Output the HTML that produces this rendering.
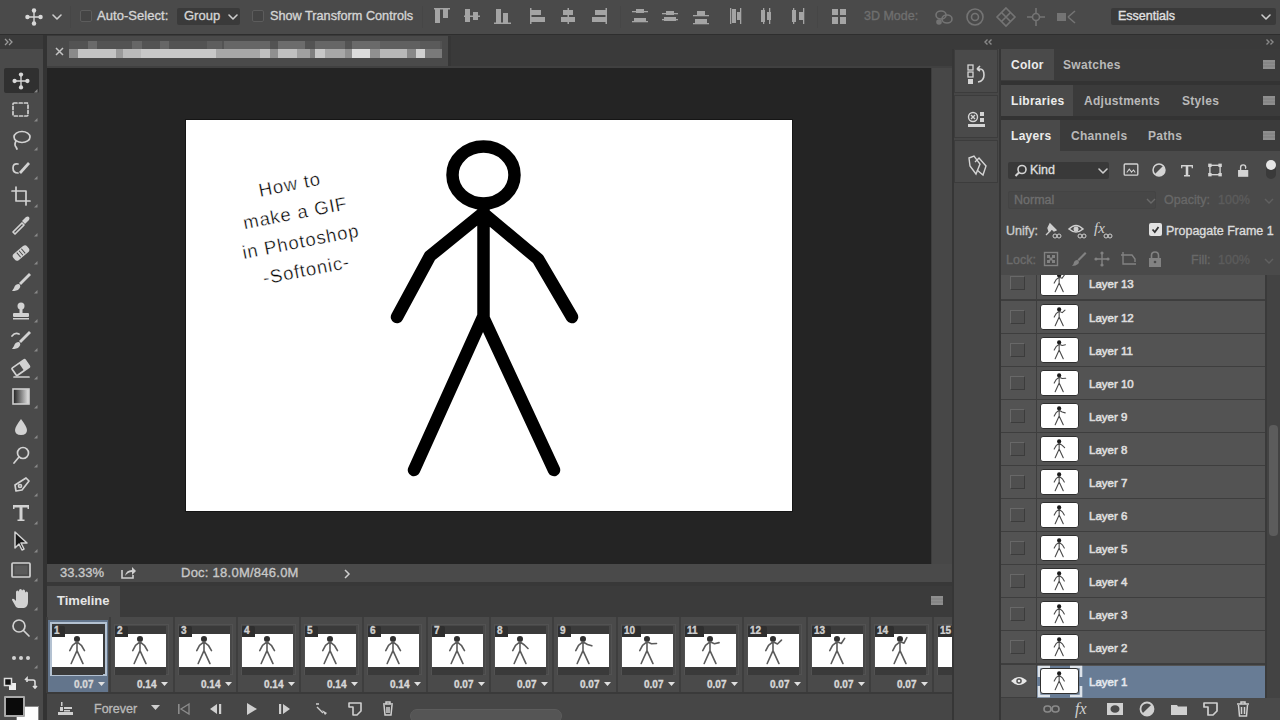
<!DOCTYPE html><html><head><meta charset="utf-8"><style>
*{margin:0;padding:0;box-sizing:border-box}
html,body{width:1280px;height:720px;overflow:hidden;background:#3a3a3a;font-family:"Liberation Sans",sans-serif;color:#d6d6d6}
.a{position:absolute}
.t{position:absolute;white-space:nowrap;font-size:12px;line-height:14px;-webkit-text-stroke:0.35px currentColor}
svg{position:absolute;overflow:visible}
.ic{fill:none;stroke:#cdcdcd;stroke-width:1.6;stroke-linecap:round;stroke-linejoin:round}
.icf{fill:#cdcdcd;stroke:none}
.tab{position:absolute;font-size:12px;font-weight:bold;letter-spacing:.3px;line-height:14px;white-space:nowrap}
</style></head><body>
<svg width="0" height="0" style="position:absolute"><symbol id="fig" viewBox="0 0 606 391">
<g fill="none" stroke="#000" stroke-width="12.5" stroke-linecap="round" stroke-linejoin="round">
<ellipse cx="297.5" cy="55" rx="31" ry="28.5"/>
<path d="M297.5 84 V197 M297 93 L244 136 L211 197 M297 93 L352 139 L386 197 M297 197 L228 350 M297 197 L368 350"/>
</g></symbol>
<symbol id="figw" viewBox="0 0 606 391">
<g fill="none" stroke="#000" stroke-width="14" stroke-linecap="round" stroke-linejoin="round">
<circle cx="297" cy="55" r="31"/>
<path d="M297 88 V197 M297 93 L244 136 L211 197 M297 93 L352 110 L400 80 M297 197 L228 350 M297 197 L368 350"/>
</g></symbol>
<symbol id="figt" viewBox="0 0 606 391">
<circle cx="297" cy="60" r="36" fill="#1a1a1a"/>
<g fill="none" stroke="#4a4a4a" stroke-width="19" stroke-linecap="round" stroke-linejoin="round">
<path d="M297 88 V197 M297 93 L244 136 L211 197 M297 93 L352 139 L386 197 M297 197 L228 350 M297 197 L368 350"/>
</g></symbol>
<symbol id="figtw" viewBox="0 0 606 391">
<circle cx="297" cy="60" r="36" fill="#1a1a1a"/>
<g fill="none" stroke="#4a4a4a" stroke-width="19" stroke-linecap="round" stroke-linejoin="round">
<path d="M297 88 V197 M297 93 L244 136 L211 197 M297 93 L352 120 L410 90 M297 197 L228 350 M297 197 L368 350"/>
</g></symbol><symbol id="figt8" viewBox="0 0 606 391">
<circle cx="297" cy="60" r="36" fill="#1a1a1a"/>
<g fill="none" stroke="#4a4a4a" stroke-width="19" stroke-linecap="round" stroke-linejoin="round">
<path d="M297 88 V197 M297 93 L244 136 L211 197 M297 93 L350 130 L392 172 M297 197 L228 350 M297 197 L368 350"/>
</g></symbol>
<symbol id="figt9" viewBox="0 0 606 391">
<circle cx="297" cy="60" r="36" fill="#1a1a1a"/>
<g fill="none" stroke="#4a4a4a" stroke-width="19" stroke-linecap="round" stroke-linejoin="round">
<path d="M297 88 V197 M297 93 L244 136 L211 197 M297 93 L350 125 L402 140 M297 197 L228 350 M297 197 L368 350"/>
</g></symbol>
<symbol id="figt10" viewBox="0 0 606 391">
<circle cx="297" cy="60" r="36" fill="#1a1a1a"/>
<g fill="none" stroke="#4a4a4a" stroke-width="19" stroke-linecap="round" stroke-linejoin="round">
<path d="M297 88 V197 M297 93 L244 136 L211 197 M297 93 L350 115 L410 112 M297 197 L228 350 M297 197 L368 350"/>
</g></symbol>
<symbol id="figt11" viewBox="0 0 606 391">
<circle cx="297" cy="60" r="36" fill="#1a1a1a"/>
<g fill="none" stroke="#4a4a4a" stroke-width="19" stroke-linecap="round" stroke-linejoin="round">
<path d="M297 88 V197 M297 93 L244 136 L211 197 M297 93 L350 115 L405 102 M297 197 L228 350 M297 197 L368 350"/>
</g></symbol>
<symbol id="figt12" viewBox="0 0 606 391">
<circle cx="297" cy="60" r="36" fill="#1a1a1a"/>
<g fill="none" stroke="#4a4a4a" stroke-width="19" stroke-linecap="round" stroke-linejoin="round">
<path d="M297 88 V197 M297 93 L244 136 L211 197 M297 93 L350 118 L398 72 M297 197 L228 350 M297 197 L368 350"/>
</g></symbol>
<symbol id="figt13" viewBox="0 0 606 391">
<circle cx="297" cy="60" r="36" fill="#1a1a1a"/>
<g fill="none" stroke="#4a4a4a" stroke-width="19" stroke-linecap="round" stroke-linejoin="round">
<path d="M297 88 V197 M297 93 L244 136 L211 197 M297 93 L348 112 L388 52 M297 197 L228 350 M297 197 L368 350"/>
</g></symbol>
<symbol id="figt14" viewBox="0 0 606 391">
<circle cx="297" cy="60" r="36" fill="#1a1a1a"/>
<g fill="none" stroke="#4a4a4a" stroke-width="19" stroke-linecap="round" stroke-linejoin="round">
<path d="M297 88 V197 M297 93 L244 136 L211 197 M297 93 L345 108 L378 42 M297 197 L228 350 M297 197 L368 350"/>
</g></symbol>
</svg>
<div id="wrap" style="position:absolute;left:0;top:0;width:1280px;height:720px;overflow:hidden">
<div class="a" style="left:0px;top:0px;width:1280px;height:34px;background:#4a4a4a;"></div>
<div class="a" style="left:0px;top:34px;width:1280px;height:1px;background:#2e2e2e;"></div>
<svg style="left:20px;top:4px;" width="28" height="28" viewBox="0 0 28 28"><g transform="translate(14,13) scale(0.82)"><path d="M-8 0H8M0 -8V8" stroke="#d8d8d8" stroke-width="1.7"/><g fill="#d8d8d8"><circle cx="-8" cy="0" r="2.7"/><circle cx="8" cy="0" r="2.7"/><circle cx="0" cy="-8" r="2.7"/><circle cx="0" cy="8" r="2.7"/></g></g></svg>
<svg style="left:50px;top:10px;" width="14" height="14" viewBox="0 0 14 14"><path class="ic" d="M3 5 L7 9 L11 5"/></svg>
<div class="a" style="left:70px;top:6px;width:1px;height:22px;background:#464646;"></div>
<div class="a" style="left:80px;top:10px;width:12px;height:12px;background:#444;border:1px solid #5c5c5c;border-radius:2px"></div>
<div class="t" style="left:97px;top:9px;font-size:13px;color:#d4d4d4;font-weight:normal;letter-spacing:0.05px">Auto-Select:</div>
<div class="a" style="left:177px;top:8px;width:63px;height:17px;background:#3a3a3a;border-radius:2px"></div>
<div class="t" style="left:184px;top:9px;font-size:13px;color:#d4d4d4;font-weight:normal;">Group</div>
<svg style="left:226px;top:10px;" width="14" height="14" viewBox="0 0 14 14"><path class="ic" d="M3 5 L7 9 L11 5"/></svg>
<div class="a" style="left:252px;top:10px;width:12px;height:12px;background:#444;border:1px solid #5c5c5c;border-radius:2px"></div>
<div class="t" style="left:270px;top:9px;font-size:12.7px;color:#d4d4d4;font-weight:normal;">Show Transform Controls</div>
<div class="a" style="left:422px;top:6px;width:1px;height:22px;background:#464646;"></div>
<svg style="left:430px;top:4px;" width="24" height="24" viewBox="0 0 24 24"><g fill="#a4a4a4"><rect x="4" y="4" width="16" height="1.5"/><rect x="5" y="5" width="5" height="14"/><rect x="13" y="5" width="5" height="9"/></g></svg>
<svg style="left:460px;top:4px;" width="24" height="24" viewBox="0 0 24 24"><g fill="#a4a4a4"><rect x="4" y="11.5" width="16" height="1.5"/><rect x="5" y="5" width="5" height="13"/><rect x="13" y="8" width="5" height="8"/></g></svg>
<svg style="left:490px;top:4px;" width="24" height="24" viewBox="0 0 24 24"><g fill="#a4a4a4"><rect x="4" y="18.5" width="17" height="1.5"/><rect x="6" y="5" width="5" height="14"/><rect x="13" y="9" width="5" height="10"/></g></svg>
<svg style="left:525px;top:4px;" width="24" height="24" viewBox="0 0 24 24"><g fill="#a4a4a4"><rect x="5" y="4" width="1.5" height="16"/><rect x="6" y="6" width="10" height="5"/><rect x="6" y="13" width="14" height="5"/></g></svg>
<svg style="left:556px;top:4px;" width="24" height="24" viewBox="0 0 24 24"><g fill="#a4a4a4"><rect x="11.5" y="4" width="1.5" height="16"/><rect x="7" y="6" width="10" height="5"/><rect x="5" y="13" width="14" height="5"/></g></svg>
<svg style="left:587px;top:4px;" width="24" height="24" viewBox="0 0 24 24"><g fill="#a4a4a4"><rect x="18.5" y="4" width="1.5" height="16"/><rect x="8" y="6" width="11" height="5"/><rect x="5" y="13" width="14" height="5"/></g></svg>
<div class="a" style="left:620px;top:6px;width:1px;height:22px;background:#464646;"></div>
<svg style="left:628px;top:4px;" width="24" height="24" viewBox="0 0 24 24"><g fill="#a4a4a4"><rect x="4" y="7" width="16" height="1.3"/><rect x="8" y="5" width="8" height="4"/><rect x="4" y="17" width="16" height="1.3"/><rect x="6" y="14" width="12" height="4"/></g></svg>
<svg style="left:658px;top:4px;" width="24" height="24" viewBox="0 0 24 24"><g fill="#a4a4a4"><rect x="4" y="9" width="16" height="1.3"/><rect x="8" y="7" width="8" height="4"/><rect x="4" y="15" width="16" height="1.3"/><rect x="6" y="13" width="12" height="4"/></g></svg>
<svg style="left:689px;top:4px;" width="24" height="24" viewBox="0 0 24 24"><g fill="#a4a4a4"><rect x="4" y="11" width="16" height="1.3"/><rect x="8" y="7" width="8" height="4"/><rect x="4" y="19" width="16" height="1.3"/><rect x="6" y="15" width="12" height="4"/></g></svg>
<svg style="left:724px;top:4px;" width="24" height="24" viewBox="0 0 24 24"><g fill="#a4a4a4"><rect x="6" y="4" width="1.3" height="16"/><rect x="8" y="5" width="4" height="14"/><rect x="16" y="4" width="1.3" height="16"/><rect x="13" y="8" width="4" height="8"/></g></svg>
<svg style="left:754px;top:4px;" width="24" height="24" viewBox="0 0 24 24"><g fill="#a4a4a4"><rect x="9" y="4" width="1.3" height="16"/><rect x="7" y="6" width="4" height="12"/><rect x="15" y="4" width="1.3" height="16"/><rect x="13" y="8" width="4" height="8"/></g></svg>
<svg style="left:786px;top:4px;" width="24" height="24" viewBox="0 0 24 24"><g fill="#a4a4a4"><rect x="7" y="4" width="1.3" height="16"/><rect x="6" y="6" width="4" height="12"/><rect x="17" y="4" width="1.3" height="16"/><rect x="13" y="8" width="4" height="8"/></g></svg>
<div class="a" style="left:817px;top:6px;width:1px;height:22px;background:#464646;"></div>
<svg style="left:827px;top:4px;" width="24" height="24" viewBox="0 0 24 24"><g fill="#a4a4a4"><rect x="5" y="5" width="6" height="6"/><rect x="13" y="5" width="6" height="6"/><rect x="5" y="13" width="6" height="7"/><rect x="13" y="13" width="6" height="7"/></g></svg>
<div class="t" style="left:864px;top:9px;font-size:12.5px;color:#6f6f6f;font-weight:normal;">3D Mode:</div>
<svg style="left:933px;top:6px;" width="22" height="22" viewBox="0 0 22 22"><g fill="none" stroke="#747474" stroke-width="1.6"><ellipse cx="8" cy="9" rx="5" ry="4"/><ellipse cx="14" cy="13" rx="5" ry="4"/><circle cx="6" cy="16" r="2" fill="#747474"/></g></svg>
<svg style="left:964px;top:6px;" width="22" height="22" viewBox="0 0 22 22"><g fill="none" stroke="#747474" stroke-width="1.6"><circle cx="11" cy="11" r="8"/><circle cx="11" cy="11" r="3.5"/></g></svg>
<svg style="left:995px;top:6px;" width="22" height="22" viewBox="0 0 22 22"><g fill="none" stroke="#747474" stroke-width="1.6"><path d="M11 2 L20 11 L11 20 L2 11Z"/><path d="M6.5 6.5 L15.5 15.5 M15.5 6.5 L6.5 15.5"/></g></svg>
<svg style="left:1025px;top:6px;" width="22" height="22" viewBox="0 0 22 22"><g fill="none" stroke="#747474" stroke-width="1.6"><circle cx="11" cy="11" r="3.5"/><path d="M11 2V7M11 15V20M2 11H7M15 11H20"/></g></svg>
<svg style="left:1056px;top:6px;" width="22" height="22" viewBox="0 0 22 22"><g fill="#747474"><rect x="1" y="7" width="9" height="8"/></g><g fill="none" stroke="#747474" stroke-width="1.6"><path d="M12 11 L19 5 M12 11 L19 17"/></g></svg>
<div class="a" style="left:1111px;top:8px;width:165px;height:17px;background:#3a3a3a;border-radius:2px"></div>
<div class="t" style="left:1118px;top:9px;font-size:12.5px;color:#e0e0e0;font-weight:normal;">Essentials</div>
<svg style="left:1259px;top:10px;" width="14" height="14" viewBox="0 0 14 14"><path class="ic" d="M3 5 L7 9 L11 5"/></svg>
<div class="a" style="left:0px;top:35px;width:43px;height:14px;background:#3b3b3b;"></div>
<svg style="left:3px;top:37px;" width="14" height="10" viewBox="0 0 14 10"><path d="M2 2 L5 5 L2 8 M6 2 L9 5 L6 8" fill="none" stroke="#9a9a9a" stroke-width="1.3"/></svg>
<div class="a" style="left:0px;top:49px;width:43px;height:671px;background:#4a4a4a;"></div>
<div class="a" style="left:43px;top:35px;width:4px;height:685px;background:#333333;"></div>
<div class="a" style="left:4px;top:68px;width:35px;height:25px;background:#303030;border-radius:2px"></div>
<svg style="left:9px;top:69px;" width="24" height="24" viewBox="0 0 24 24"><g transform="translate(12,12) scale(0.8)"><path d="M-8 0H8M0 -8V8" stroke="#d8d8d8" stroke-width="1.7"/><g fill="#d8d8d8"><circle cx="-8" cy="0" r="2.7"/><circle cx="8" cy="0" r="2.7"/><circle cx="0" cy="-8" r="2.7"/><circle cx="0" cy="8" r="2.7"/></g></g></svg>
<svg style="left:34px;top:89px;" width="4" height="4" viewBox="0 0 4 4"><path d="M3.5 0 L3.5 3.5 L0 3.5Z" fill="#888"/></svg>
<svg style="left:9px;top:98px;" width="24" height="24" viewBox="0 0 24 24"><rect x="4" y="5" width="15" height="13" rx="1" fill="none" stroke="#d2d2d2" stroke-width="1.7" stroke-linecap="round" stroke-linejoin="round" stroke-dasharray="3 2.2"/></svg>
<svg style="left:34px;top:118px;" width="4" height="4" viewBox="0 0 4 4"><path d="M3.5 0 L3.5 3.5 L0 3.5Z" fill="#888"/></svg>
<svg style="left:9px;top:127px;" width="24" height="24" viewBox="0 0 24 24"><g fill="none" stroke="#d2d2d2" stroke-width="1.7" stroke-linecap="round" stroke-linejoin="round"><ellipse cx="13" cy="10" rx="8" ry="5.5"/><path d="M7 14 Q5 18 7 20 L8 22"/></g></svg>
<svg style="left:34px;top:147px;" width="4" height="4" viewBox="0 0 4 4"><path d="M3.5 0 L3.5 3.5 L0 3.5Z" fill="#888"/></svg>
<svg style="left:9px;top:156px;" width="24" height="24" viewBox="0 0 24 24"><g fill="none" stroke="#d2d2d2" stroke-width="1.7" stroke-linecap="round" stroke-linejoin="round"><path d="M9 17 Q4 17 4 12 Q4 7 9 8"/></g><path d="M10 16 L19 6 L21 8 L12 18Z" fill="#d2d2d2"/></svg>
<svg style="left:34px;top:176px;" width="4" height="4" viewBox="0 0 4 4"><path d="M3.5 0 L3.5 3.5 L0 3.5Z" fill="#888"/></svg>
<svg style="left:9px;top:184px;" width="24" height="24" viewBox="0 0 24 24"><g fill="none" stroke="#d2d2d2" stroke-width="1.7" stroke-linecap="round" stroke-linejoin="round"><path d="M7 3V17H21 M3 7H17V21"/></g></svg>
<svg style="left:34px;top:204px;" width="4" height="4" viewBox="0 0 4 4"><path d="M3.5 0 L3.5 3.5 L0 3.5Z" fill="#888"/></svg>
<svg style="left:9px;top:213px;" width="24" height="24" viewBox="0 0 24 24"><g fill="none" stroke="#d2d2d2" stroke-width="1.7" stroke-linecap="round" stroke-linejoin="round"><path d="M5 20 L4 19 L13 10 L15 12 L6 21Z"/></g><path d="M13 8 L17 4 Q19 3 20 4 Q21 5 20 7 L16 11Z" fill="#d2d2d2"/></svg>
<svg style="left:34px;top:233px;" width="4" height="4" viewBox="0 0 4 4"><path d="M3.5 0 L3.5 3.5 L0 3.5Z" fill="#888"/></svg>
<svg style="left:9px;top:241px;" width="24" height="24" viewBox="0 0 24 24"><g transform="rotate(-40 12 12)"><rect x="3" y="8" width="18" height="8" rx="3" fill="#d2d2d2"/><path d="M9 9V15M12 9V15M15 9V15" stroke="#4a4a4a" stroke-width="1"/></g></svg>
<svg style="left:34px;top:261px;" width="4" height="4" viewBox="0 0 4 4"><path d="M3.5 0 L3.5 3.5 L0 3.5Z" fill="#888"/></svg>
<svg style="left:9px;top:270px;" width="24" height="24" viewBox="0 0 24 24"><path d="M20 3 L22 5 L12 15 L10 13Z" fill="#d2d2d2"/><path d="M10 14 Q6 14 5 18 L3 21 Q8 21 10 19 Q12 17 11 15Z" fill="#d2d2d2"/></svg>
<svg style="left:34px;top:290px;" width="4" height="4" viewBox="0 0 4 4"><path d="M3.5 0 L3.5 3.5 L0 3.5Z" fill="#888"/></svg>
<svg style="left:9px;top:299px;" width="24" height="24" viewBox="0 0 24 24"><circle cx="12" cy="7" r="3.5" fill="#d2d2d2"/><rect x="10.5" y="9" width="3" height="5" fill="#d2d2d2"/><rect x="4" y="14" width="16" height="4" rx="1" fill="#d2d2d2"/><rect x="4" y="19" width="16" height="1.5" fill="#d2d2d2"/></svg>
<svg style="left:34px;top:319px;" width="4" height="4" viewBox="0 0 4 4"><path d="M3.5 0 L3.5 3.5 L0 3.5Z" fill="#888"/></svg>
<svg style="left:9px;top:328px;" width="24" height="24" viewBox="0 0 24 24"><path d="M20 3 L22 5 L12 15 L10 13Z" fill="#d2d2d2"/><path d="M10 14 Q6 14 5 18 L3 21 Q8 21 10 19 Q12 17 11 15Z" fill="#d2d2d2"/><path d="M3 8 Q6 4 10 6" fill="none" stroke="#d2d2d2" stroke-width="1.7" stroke-linecap="round" stroke-linejoin="round"/></svg>
<svg style="left:34px;top:348px;" width="4" height="4" viewBox="0 0 4 4"><path d="M3.5 0 L3.5 3.5 L0 3.5Z" fill="#888"/></svg>
<svg style="left:9px;top:356px;" width="24" height="24" viewBox="0 0 24 24"><g transform="rotate(-35 12 12)"><rect x="4" y="7" width="16" height="9" rx="1" fill="none" stroke="#d2d2d2" stroke-width="1.7" stroke-linecap="round" stroke-linejoin="round"/><rect x="13" y="7" width="7" height="9" fill="#d2d2d2"/></g><path d="M5 21H20" fill="none" stroke="#d2d2d2" stroke-width="1.7" stroke-linecap="round" stroke-linejoin="round"/></svg>
<svg style="left:34px;top:376px;" width="4" height="4" viewBox="0 0 4 4"><path d="M3.5 0 L3.5 3.5 L0 3.5Z" fill="#888"/></svg>
<svg style="left:12px;top:388px" width="18" height="18" viewBox="0 0 18 18"><defs><linearGradient id="gr" x1="0" x2="1"><stop offset="0" stop-color="#1e1e1e"/><stop offset="1" stop-color="#e6e6e6"/></linearGradient></defs><rect x="1" y="1" width="16" height="15" fill="url(#gr)" stroke="#cfcfcf" stroke-width="1.6"/></svg>
<svg style="left:34px;top:405px;" width="4" height="4" viewBox="0 0 4 4"><path d="M3.5 0 L3.5 3.5 L0 3.5Z" fill="#888"/></svg>
<svg style="left:9px;top:415px;" width="24" height="24" viewBox="0 0 24 24"><path d="M12 4 Q18 12 18 15 Q18 20 12 20 Q6 20 6 15 Q6 12 12 4Z" fill="#d2d2d2"/></svg>
<svg style="left:34px;top:435px;" width="4" height="4" viewBox="0 0 4 4"><path d="M3.5 0 L3.5 3.5 L0 3.5Z" fill="#888"/></svg>
<svg style="left:9px;top:444px;" width="24" height="24" viewBox="0 0 24 24"><circle cx="14" cy="9" r="5.5" fill="none" stroke="#d2d2d2" stroke-width="1.7" stroke-linecap="round" stroke-linejoin="round"/><path d="M10 13 L5 19" fill="none" stroke="#d2d2d2" stroke-width="1.7" stroke-linecap="round" stroke-linejoin="round" stroke-width="2.2"/></svg>
<svg style="left:34px;top:464px;" width="4" height="4" viewBox="0 0 4 4"><path d="M3.5 0 L3.5 3.5 L0 3.5Z" fill="#888"/></svg>
<svg style="left:9px;top:473px;" width="24" height="24" viewBox="0 0 24 24"><g fill="none" stroke="#d2d2d2" stroke-width="1.7" stroke-linecap="round" stroke-linejoin="round"><path d="M17 5 L20 8 L13 17 L7 18 L6 12 Z"/><circle cx="11" cy="13" r="1.5"/></g></svg>
<svg style="left:34px;top:493px;" width="4" height="4" viewBox="0 0 4 4"><path d="M3.5 0 L3.5 3.5 L0 3.5Z" fill="#888"/></svg>
<svg style="left:9px;top:501px;" width="24" height="24" viewBox="0 0 24 24"><path d="M4 4H20V8H18.5V6.5H13.5V18.5H15.5V20H8.5V18.5H10.5V6.5H5.5V8H4Z" fill="#d2d2d2"/></svg>
<svg style="left:34px;top:521px;" width="4" height="4" viewBox="0 0 4 4"><path d="M3.5 0 L3.5 3.5 L0 3.5Z" fill="#888"/></svg>
<svg style="left:9px;top:529px;" width="24" height="24" viewBox="0 0 24 24"><path d="M6 3 L6 19 L10 15 L13 21 L15 20 L12 14 L18 14Z" fill="#1a1a1a" stroke="#d2d2d2" stroke-width="1.5" stroke-linejoin="round"/></svg>
<svg style="left:34px;top:549px;" width="4" height="4" viewBox="0 0 4 4"><path d="M3.5 0 L3.5 3.5 L0 3.5Z" fill="#888"/></svg>
<svg style="left:9px;top:558px;" width="24" height="24" viewBox="0 0 24 24"><rect x="3" y="5" width="18" height="14" rx="1" fill="none" stroke="#d2d2d2" stroke-width="1.7" stroke-linecap="round" stroke-linejoin="round"/><rect x="5.5" y="7.5" width="13" height="9" fill="#5a5a5a"/></svg>
<svg style="left:34px;top:578px;" width="4" height="4" viewBox="0 0 4 4"><path d="M3.5 0 L3.5 3.5 L0 3.5Z" fill="#888"/></svg>
<svg style="left:9px;top:587px;" width="24" height="24" viewBox="0 0 24 24"><path d="M7 20 L3 13 Q3 11 5 12 L7 14 V5 Q7 3.5 8.5 3.5 Q10 3.5 10 5 V11 V3.5 Q10 2 11.5 2 Q13 2 13 3.5 V11 V4 Q13 2.5 14.5 2.5 Q16 2.5 16 4 V11 V6 Q16 4.5 17.5 4.5 Q19 4.5 19 6 V15 Q19 20 15 21 H9Z" fill="#d2d2d2"/></svg>
<svg style="left:34px;top:607px;" width="4" height="4" viewBox="0 0 4 4"><path d="M3.5 0 L3.5 3.5 L0 3.5Z" fill="#888"/></svg>
<svg style="left:9px;top:616px;" width="24" height="24" viewBox="0 0 24 24"><circle cx="10" cy="10" r="6" fill="none" stroke="#d2d2d2" stroke-width="1.7" stroke-linecap="round" stroke-linejoin="round"/><path d="M14.5 14.5 L20 20" fill="none" stroke="#d2d2d2" stroke-width="1.7" stroke-linecap="round" stroke-linejoin="round" stroke-width="2.2"/></svg>
<svg style="left:34px;top:636px;" width="4" height="4" viewBox="0 0 4 4"><path d="M3.5 0 L3.5 3.5 L0 3.5Z" fill="#888"/></svg>
<svg style="left:9px;top:650px;" width="24" height="16" viewBox="0 0 24 16"><g fill="#d2d2d2"><circle cx="5" cy="8" r="2"/><circle cx="12" cy="8" r="2"/><circle cx="19" cy="8" r="2"/></g></svg>
<svg style="left:34px;top:665px;" width="4" height="4" viewBox="0 0 4 4"><path d="M3.5 0 L3.5 3.5 L0 3.5Z" fill="#888"/></svg>
<svg style="left:3px;top:677px;" width="14" height="14" viewBox="0 0 14 14"><rect x="6" y="6" width="7" height="7" fill="#eee"/><rect x="1.5" y="1.5" width="7" height="7" fill="#111" stroke="#ddd" stroke-width="1.5"/></svg>
<svg style="left:24px;top:677px;" width="14" height="14" viewBox="0 0 14 14"><path d="M3 3 H9 Q11 3 11 5 V11 M9 9 L11 11 L13 9 M1 3 L3 1 V5" fill="none" stroke="#ddd" stroke-width="1.6"/></svg>
<div class="a" style="left:16px;top:706px;width:23px;height:16px;background:#ffffff;border:1px solid #888"></div>
<div class="a" style="left:4px;top:696px;width:21px;height:21px;background:#0a0a0a;border:2px solid #a8a8a8;border-radius:1px"></div>
<div class="a" style="left:47px;top:35px;width:905px;height:31px;background:#3a3a3a;"></div>
<div class="a" style="left:47px;top:36px;width:401px;height:30px;background:#4a4a4a;"></div>
<div class="a" style="left:448px;top:36px;width:3px;height:30px;background:#363636;"></div>
<svg style="left:55px;top:47px;" width="9" height="9" viewBox="0 0 9 9"><path d="M1 1 L8 8 M8 1 L1 8" stroke="#c4c4c4" stroke-width="1.5"/></svg>
<div class="a" style="left:69px;top:41px;width:373px;height:8px;background:#535353;"></div>
<div class="a" style="left:88px;top:41px;width:9px;height:8px;background:rgb(106,106,106);"></div>
<div class="a" style="left:132px;top:41px;width:10px;height:8px;background:rgb(102,102,102);"></div>
<div class="a" style="left:160px;top:41px;width:9px;height:8px;background:rgb(102,102,102);"></div>
<div class="a" style="left:207px;top:41px;width:15px;height:8px;background:rgb(94,94,94);"></div>
<div class="a" style="left:224px;top:41px;width:46px;height:8px;background:rgb(102,102,102);"></div>
<div class="a" style="left:278px;top:41px;width:27px;height:8px;background:rgb(108,108,108);"></div>
<div class="a" style="left:315px;top:41px;width:30px;height:8px;background:rgb(102,102,102);"></div>
<div class="a" style="left:352px;top:41px;width:28px;height:8px;background:rgb(106,106,106);"></div>
<div class="a" style="left:380px;top:41px;width:40px;height:8px;background:rgb(96,96,96);"></div>
<div class="a" style="left:420px;top:41px;width:20px;height:8px;background:rgb(90,90,90);"></div>
<div class="a" style="left:69px;top:49px;width:9px;height:9px;background:rgb(138,138,138);"></div>
<div class="a" style="left:78px;top:49px;width:38px;height:9px;background:rgb(196,196,196);"></div>
<div class="a" style="left:116px;top:49px;width:7px;height:9px;background:rgb(154,154,154);"></div>
<div class="a" style="left:123px;top:49px;width:18px;height:9px;background:rgb(186,186,186);"></div>
<div class="a" style="left:141px;top:49px;width:75px;height:9px;background:rgb(200,200,200);"></div>
<div class="a" style="left:216px;top:49px;width:44px;height:9px;background:rgb(168,168,168);"></div>
<div class="a" style="left:260px;top:49px;width:10px;height:9px;background:rgb(192,192,192);"></div>
<div class="a" style="left:270px;top:49px;width:8px;height:9px;background:rgb(144,144,144);"></div>
<div class="a" style="left:278px;top:49px;width:19px;height:9px;background:rgb(192,192,192);"></div>
<div class="a" style="left:297px;top:49px;width:13px;height:9px;background:rgb(160,160,160);"></div>
<div class="a" style="left:310px;top:49px;width:5px;height:9px;background:rgb(128,128,128);"></div>
<div class="a" style="left:315px;top:49px;width:10px;height:9px;background:rgb(200,200,200);"></div>
<div class="a" style="left:325px;top:49px;width:20px;height:9px;background:rgb(168,168,168);"></div>
<div class="a" style="left:345px;top:49px;width:7px;height:9px;background:rgb(144,144,144);"></div>
<div class="a" style="left:352px;top:49px;width:18px;height:9px;background:rgb(220,220,220);"></div>
<div class="a" style="left:370px;top:49px;width:10px;height:9px;background:rgb(144,144,144);"></div>
<div class="a" style="left:380px;top:49px;width:27px;height:9px;background:rgb(184,184,184);"></div>
<div class="a" style="left:407px;top:49px;width:9px;height:9px;background:rgb(136,136,136);"></div>
<div class="a" style="left:416px;top:49px;width:9px;height:9px;background:rgb(208,208,208);"></div>
<div class="a" style="left:425px;top:49px;width:17px;height:9px;background:rgb(122,122,122);"></div>
<div class="a" style="left:47px;top:66px;width:905px;height:2px;background:#404040;"></div>
<div class="a" style="left:47px;top:68px;width:884px;height:496px;background:#242424;"></div>
<div class="a" style="left:185px;top:119px;width:608px;height:393px;background:#151515;"></div>
<div class="a" style="left:186px;top:120px;width:606px;height:391px;background:#ffffff;"></div>
<svg style="left:186px;top:120px" width="606" height="391" viewBox="0 0 606 391"><use href="#fig"/></svg>
<div class="a" style="left:188px;top:169px;width:220px;height:116px;transform:rotate(-11deg);text-align:center;font-size:18.5px;line-height:29px;color:#000;letter-spacing:0.9px;-webkit-text-stroke:0.35px #fff;font-family:'Liberation Sans',sans-serif">How to<br>make a GIF<br>in Photoshop<br>-Softonic-</div>
<div class="a" style="left:931px;top:68px;width:21px;height:496px;background:#474747;"></div>
<div class="a" style="left:931px;top:68px;width:1px;height:496px;background:#3c3c3c;"></div>
<div class="a" style="left:47px;top:564px;width:905px;height:18px;background:#4a4a4a;"></div>
<div class="t" style="left:60px;top:566px;font-size:13px;color:#c8c8c8;font-weight:normal;">33.33%</div>
<svg style="left:119px;top:565px;" width="18" height="16" viewBox="0 0 18 16"><path d="M3 5 V13 H14 V10" fill="none" stroke="#cfcfcf" stroke-width="1.6"/><path d="M6 11 Q7 5 13 5 V2 L17 6 L13 10 V7 Q9 7 6 11Z" fill="#cfcfcf"/></svg>
<div class="t" style="left:181px;top:566px;font-size:13px;color:#c8c8c8;font-weight:normal;letter-spacing:0.25px">Doc: 18.0M/846.0M</div>
<svg style="left:341px;top:567px;" width="12" height="14" viewBox="0 0 12 14"><path d="M4 3 L8 7 L4 11" fill="none" stroke="#cfcfcf" stroke-width="1.5"/></svg>
<div class="a" style="left:47px;top:582px;width:905px;height:4px;background:#383838;"></div>
<div class="a" style="left:47px;top:586px;width:905px;height:31px;background:#3b3b3b;"></div>
<div class="a" style="left:47px;top:586px;width:73px;height:31px;background:#4a4a4a;"></div>
<div class="tab" style="left:57px;top:594px;font-size:13px;color:#e6e6e6;letter-spacing:0">Timeline</div>
<svg style="left:931px;top:596px;" width="13" height="10" viewBox="0 0 13 10"><rect x="0" y="0" width="12" height="9" fill="#8e8e8e"/><g fill="#7a7a7a"><rect x="0" y="2.6" width="12" height="0.8"/><rect x="0" y="5.6" width="12" height="0.8"/></g></svg>
<div class="a" style="left:47px;top:617px;width:905px;height:76px;background:#4a4a4a;"></div>
<div class="a" style="left:46px;top:617px;width:2px;height:76px;background:#3e3e3e;"></div>
<div class="a" style="left:48px;top:620px;width:60px;height:72px;background:#63758c;"></div>
<div class="a" style="left:50px;top:622px;width:57px;height:54px;background:#3a3a3a;border:2px solid #b3c1d1"></div>
<div class="a" style="left:52px;top:626px;width:51px;height:8px;background:#3a3a3a;"></div>
<div class="a" style="left:52px;top:667px;width:51px;height:8px;background:#3a3a3a;"></div>
<div class="a" style="left:52px;top:626px;width:13px;height:11px;background:#2e2e2e;border-radius:2px 2px 0 0"></div>
<div class="t" style="left:54px;top:626px;font-size:10px;line-height:10px;font-weight:bold;color:#d0d0d0">1</div>
<div class="a" style="left:52px;top:634px;width:51px;height:33px;background:#ffffff;"></div>
<div class="a" style="left:52px;top:634px;width:13px;height:3px;background:#2e2e2e;"></div>
<svg style="left:52px;top:634px" width="51" height="33" viewBox="0 0 606 391" preserveAspectRatio="none"><use href="#figt" style="opacity:.9"/></svg>
<div class="t" style="left:74px;top:679px;font-size:10px;line-height:12px;color:#d8d8d8;font-weight:bold">0.07</div>
<svg style="left:98px;top:682px;" width="8" height="6" viewBox="0 0 8 6"><path d="M0 0 H7 L3.5 4Z" fill="#e0e0e0"/></svg>
<div class="a" style="left:109px;top:617px;width:2px;height:76px;background:#3e3e3e;"></div>
<div class="a" style="left:114px;top:624px;width:55px;height:51px;background:#484848;border:1px solid #525252"></div>
<div class="a" style="left:115px;top:626px;width:51px;height:8px;background:#3a3a3a;"></div>
<div class="a" style="left:115px;top:667px;width:51px;height:8px;background:#3a3a3a;"></div>
<div class="a" style="left:115px;top:626px;width:13px;height:11px;background:#2e2e2e;border-radius:2px 2px 0 0"></div>
<div class="t" style="left:117px;top:626px;font-size:10px;line-height:10px;font-weight:bold;color:#d0d0d0">2</div>
<div class="a" style="left:115px;top:634px;width:51px;height:33px;background:#ffffff;"></div>
<div class="a" style="left:115px;top:634px;width:13px;height:3px;background:#2e2e2e;"></div>
<svg style="left:115px;top:634px" width="51" height="33" viewBox="0 0 606 391" preserveAspectRatio="none"><use href="#figt" style="opacity:.9"/></svg>
<div class="t" style="left:137px;top:679px;font-size:10px;line-height:12px;color:#d8d8d8;font-weight:bold">0.14</div>
<svg style="left:161px;top:682px;" width="8" height="6" viewBox="0 0 8 6"><path d="M0 0 H7 L3.5 4Z" fill="#e0e0e0"/></svg>
<div class="a" style="left:173px;top:617px;width:2px;height:76px;background:#3e3e3e;"></div>
<div class="a" style="left:178px;top:624px;width:55px;height:51px;background:#484848;border:1px solid #525252"></div>
<div class="a" style="left:179px;top:626px;width:51px;height:8px;background:#3a3a3a;"></div>
<div class="a" style="left:179px;top:667px;width:51px;height:8px;background:#3a3a3a;"></div>
<div class="a" style="left:179px;top:626px;width:13px;height:11px;background:#2e2e2e;border-radius:2px 2px 0 0"></div>
<div class="t" style="left:181px;top:626px;font-size:10px;line-height:10px;font-weight:bold;color:#d0d0d0">3</div>
<div class="a" style="left:179px;top:634px;width:51px;height:33px;background:#ffffff;"></div>
<div class="a" style="left:179px;top:634px;width:13px;height:3px;background:#2e2e2e;"></div>
<svg style="left:179px;top:634px" width="51" height="33" viewBox="0 0 606 391" preserveAspectRatio="none"><use href="#figt" style="opacity:.9"/></svg>
<div class="t" style="left:201px;top:679px;font-size:10px;line-height:12px;color:#d8d8d8;font-weight:bold">0.14</div>
<svg style="left:225px;top:682px;" width="8" height="6" viewBox="0 0 8 6"><path d="M0 0 H7 L3.5 4Z" fill="#e0e0e0"/></svg>
<div class="a" style="left:236px;top:617px;width:2px;height:76px;background:#3e3e3e;"></div>
<div class="a" style="left:241px;top:624px;width:55px;height:51px;background:#484848;border:1px solid #525252"></div>
<div class="a" style="left:242px;top:626px;width:51px;height:8px;background:#3a3a3a;"></div>
<div class="a" style="left:242px;top:667px;width:51px;height:8px;background:#3a3a3a;"></div>
<div class="a" style="left:242px;top:626px;width:13px;height:11px;background:#2e2e2e;border-radius:2px 2px 0 0"></div>
<div class="t" style="left:244px;top:626px;font-size:10px;line-height:10px;font-weight:bold;color:#d0d0d0">4</div>
<div class="a" style="left:242px;top:634px;width:51px;height:33px;background:#ffffff;"></div>
<div class="a" style="left:242px;top:634px;width:13px;height:3px;background:#2e2e2e;"></div>
<svg style="left:242px;top:634px" width="51" height="33" viewBox="0 0 606 391" preserveAspectRatio="none"><use href="#figt" style="opacity:.9"/></svg>
<div class="t" style="left:264px;top:679px;font-size:10px;line-height:12px;color:#d8d8d8;font-weight:bold">0.14</div>
<svg style="left:288px;top:682px;" width="8" height="6" viewBox="0 0 8 6"><path d="M0 0 H7 L3.5 4Z" fill="#e0e0e0"/></svg>
<div class="a" style="left:299px;top:617px;width:2px;height:76px;background:#3e3e3e;"></div>
<div class="a" style="left:304px;top:624px;width:55px;height:51px;background:#484848;border:1px solid #525252"></div>
<div class="a" style="left:305px;top:626px;width:51px;height:8px;background:#3a3a3a;"></div>
<div class="a" style="left:305px;top:667px;width:51px;height:8px;background:#3a3a3a;"></div>
<div class="a" style="left:305px;top:626px;width:13px;height:11px;background:#2e2e2e;border-radius:2px 2px 0 0"></div>
<div class="t" style="left:307px;top:626px;font-size:10px;line-height:10px;font-weight:bold;color:#d0d0d0">5</div>
<div class="a" style="left:305px;top:634px;width:51px;height:33px;background:#ffffff;"></div>
<div class="a" style="left:305px;top:634px;width:13px;height:3px;background:#2e2e2e;"></div>
<svg style="left:305px;top:634px" width="51" height="33" viewBox="0 0 606 391" preserveAspectRatio="none"><use href="#figt" style="opacity:.9"/></svg>
<div class="t" style="left:327px;top:679px;font-size:10px;line-height:12px;color:#d8d8d8;font-weight:bold">0.14</div>
<svg style="left:351px;top:682px;" width="8" height="6" viewBox="0 0 8 6"><path d="M0 0 H7 L3.5 4Z" fill="#e0e0e0"/></svg>
<div class="a" style="left:362px;top:617px;width:2px;height:76px;background:#3e3e3e;"></div>
<div class="a" style="left:367px;top:624px;width:55px;height:51px;background:#484848;border:1px solid #525252"></div>
<div class="a" style="left:368px;top:626px;width:51px;height:8px;background:#3a3a3a;"></div>
<div class="a" style="left:368px;top:667px;width:51px;height:8px;background:#3a3a3a;"></div>
<div class="a" style="left:368px;top:626px;width:13px;height:11px;background:#2e2e2e;border-radius:2px 2px 0 0"></div>
<div class="t" style="left:370px;top:626px;font-size:10px;line-height:10px;font-weight:bold;color:#d0d0d0">6</div>
<div class="a" style="left:368px;top:634px;width:51px;height:33px;background:#ffffff;"></div>
<div class="a" style="left:368px;top:634px;width:13px;height:3px;background:#2e2e2e;"></div>
<svg style="left:368px;top:634px" width="51" height="33" viewBox="0 0 606 391" preserveAspectRatio="none"><use href="#figt" style="opacity:.9"/></svg>
<div class="t" style="left:390px;top:679px;font-size:10px;line-height:12px;color:#d8d8d8;font-weight:bold">0.14</div>
<svg style="left:414px;top:682px;" width="8" height="6" viewBox="0 0 8 6"><path d="M0 0 H7 L3.5 4Z" fill="#e0e0e0"/></svg>
<div class="a" style="left:426px;top:617px;width:2px;height:76px;background:#3e3e3e;"></div>
<div class="a" style="left:431px;top:624px;width:55px;height:51px;background:#484848;border:1px solid #525252"></div>
<div class="a" style="left:432px;top:626px;width:51px;height:8px;background:#3a3a3a;"></div>
<div class="a" style="left:432px;top:667px;width:51px;height:8px;background:#3a3a3a;"></div>
<div class="a" style="left:432px;top:626px;width:13px;height:11px;background:#2e2e2e;border-radius:2px 2px 0 0"></div>
<div class="t" style="left:434px;top:626px;font-size:10px;line-height:10px;font-weight:bold;color:#d0d0d0">7</div>
<div class="a" style="left:432px;top:634px;width:51px;height:33px;background:#ffffff;"></div>
<div class="a" style="left:432px;top:634px;width:13px;height:3px;background:#2e2e2e;"></div>
<svg style="left:432px;top:634px" width="51" height="33" viewBox="0 0 606 391" preserveAspectRatio="none"><use href="#figt" style="opacity:.9"/></svg>
<div class="t" style="left:454px;top:679px;font-size:10px;line-height:12px;color:#d8d8d8;font-weight:bold">0.07</div>
<svg style="left:478px;top:682px;" width="8" height="6" viewBox="0 0 8 6"><path d="M0 0 H7 L3.5 4Z" fill="#e0e0e0"/></svg>
<div class="a" style="left:489px;top:617px;width:2px;height:76px;background:#3e3e3e;"></div>
<div class="a" style="left:494px;top:624px;width:55px;height:51px;background:#484848;border:1px solid #525252"></div>
<div class="a" style="left:495px;top:626px;width:51px;height:8px;background:#3a3a3a;"></div>
<div class="a" style="left:495px;top:667px;width:51px;height:8px;background:#3a3a3a;"></div>
<div class="a" style="left:495px;top:626px;width:13px;height:11px;background:#2e2e2e;border-radius:2px 2px 0 0"></div>
<div class="t" style="left:497px;top:626px;font-size:10px;line-height:10px;font-weight:bold;color:#d0d0d0">8</div>
<div class="a" style="left:495px;top:634px;width:51px;height:33px;background:#ffffff;"></div>
<div class="a" style="left:495px;top:634px;width:13px;height:3px;background:#2e2e2e;"></div>
<svg style="left:495px;top:634px" width="51" height="33" viewBox="0 0 606 391" preserveAspectRatio="none"><use href="#figt8" style="opacity:.9"/></svg>
<div class="t" style="left:517px;top:679px;font-size:10px;line-height:12px;color:#d8d8d8;font-weight:bold">0.07</div>
<svg style="left:541px;top:682px;" width="8" height="6" viewBox="0 0 8 6"><path d="M0 0 H7 L3.5 4Z" fill="#e0e0e0"/></svg>
<div class="a" style="left:552px;top:617px;width:2px;height:76px;background:#3e3e3e;"></div>
<div class="a" style="left:557px;top:624px;width:55px;height:51px;background:#484848;border:1px solid #525252"></div>
<div class="a" style="left:558px;top:626px;width:51px;height:8px;background:#3a3a3a;"></div>
<div class="a" style="left:558px;top:667px;width:51px;height:8px;background:#3a3a3a;"></div>
<div class="a" style="left:558px;top:626px;width:13px;height:11px;background:#2e2e2e;border-radius:2px 2px 0 0"></div>
<div class="t" style="left:560px;top:626px;font-size:10px;line-height:10px;font-weight:bold;color:#d0d0d0">9</div>
<div class="a" style="left:558px;top:634px;width:51px;height:33px;background:#ffffff;"></div>
<div class="a" style="left:558px;top:634px;width:13px;height:3px;background:#2e2e2e;"></div>
<svg style="left:558px;top:634px" width="51" height="33" viewBox="0 0 606 391" preserveAspectRatio="none"><use href="#figt9" style="opacity:.9"/></svg>
<div class="t" style="left:580px;top:679px;font-size:10px;line-height:12px;color:#d8d8d8;font-weight:bold">0.07</div>
<svg style="left:604px;top:682px;" width="8" height="6" viewBox="0 0 8 6"><path d="M0 0 H7 L3.5 4Z" fill="#e0e0e0"/></svg>
<div class="a" style="left:616px;top:617px;width:2px;height:76px;background:#3e3e3e;"></div>
<div class="a" style="left:621px;top:624px;width:55px;height:51px;background:#484848;border:1px solid #525252"></div>
<div class="a" style="left:622px;top:626px;width:51px;height:8px;background:#3a3a3a;"></div>
<div class="a" style="left:622px;top:667px;width:51px;height:8px;background:#3a3a3a;"></div>
<div class="a" style="left:622px;top:626px;width:19px;height:11px;background:#2e2e2e;border-radius:2px 2px 0 0"></div>
<div class="t" style="left:624px;top:626px;font-size:10px;line-height:10px;font-weight:bold;color:#d0d0d0">10</div>
<div class="a" style="left:622px;top:634px;width:51px;height:33px;background:#ffffff;"></div>
<div class="a" style="left:622px;top:634px;width:19px;height:3px;background:#2e2e2e;"></div>
<svg style="left:622px;top:634px" width="51" height="33" viewBox="0 0 606 391" preserveAspectRatio="none"><use href="#figt10" style="opacity:.9"/></svg>
<div class="t" style="left:644px;top:679px;font-size:10px;line-height:12px;color:#d8d8d8;font-weight:bold">0.07</div>
<svg style="left:668px;top:682px;" width="8" height="6" viewBox="0 0 8 6"><path d="M0 0 H7 L3.5 4Z" fill="#e0e0e0"/></svg>
<div class="a" style="left:679px;top:617px;width:2px;height:76px;background:#3e3e3e;"></div>
<div class="a" style="left:684px;top:624px;width:55px;height:51px;background:#484848;border:1px solid #525252"></div>
<div class="a" style="left:685px;top:626px;width:51px;height:8px;background:#3a3a3a;"></div>
<div class="a" style="left:685px;top:667px;width:51px;height:8px;background:#3a3a3a;"></div>
<div class="a" style="left:685px;top:626px;width:19px;height:11px;background:#2e2e2e;border-radius:2px 2px 0 0"></div>
<div class="t" style="left:687px;top:626px;font-size:10px;line-height:10px;font-weight:bold;color:#d0d0d0">11</div>
<div class="a" style="left:685px;top:634px;width:51px;height:33px;background:#ffffff;"></div>
<div class="a" style="left:685px;top:634px;width:19px;height:3px;background:#2e2e2e;"></div>
<svg style="left:685px;top:634px" width="51" height="33" viewBox="0 0 606 391" preserveAspectRatio="none"><use href="#figt11" style="opacity:.9"/></svg>
<div class="t" style="left:707px;top:679px;font-size:10px;line-height:12px;color:#d8d8d8;font-weight:bold">0.07</div>
<svg style="left:731px;top:682px;" width="8" height="6" viewBox="0 0 8 6"><path d="M0 0 H7 L3.5 4Z" fill="#e0e0e0"/></svg>
<div class="a" style="left:742px;top:617px;width:2px;height:76px;background:#3e3e3e;"></div>
<div class="a" style="left:747px;top:624px;width:55px;height:51px;background:#484848;border:1px solid #525252"></div>
<div class="a" style="left:748px;top:626px;width:51px;height:8px;background:#3a3a3a;"></div>
<div class="a" style="left:748px;top:667px;width:51px;height:8px;background:#3a3a3a;"></div>
<div class="a" style="left:748px;top:626px;width:19px;height:11px;background:#2e2e2e;border-radius:2px 2px 0 0"></div>
<div class="t" style="left:750px;top:626px;font-size:10px;line-height:10px;font-weight:bold;color:#d0d0d0">12</div>
<div class="a" style="left:748px;top:634px;width:51px;height:33px;background:#ffffff;"></div>
<div class="a" style="left:748px;top:634px;width:19px;height:3px;background:#2e2e2e;"></div>
<svg style="left:748px;top:634px" width="51" height="33" viewBox="0 0 606 391" preserveAspectRatio="none"><use href="#figt12" style="opacity:.9"/></svg>
<div class="t" style="left:770px;top:679px;font-size:10px;line-height:12px;color:#d8d8d8;font-weight:bold">0.07</div>
<svg style="left:794px;top:682px;" width="8" height="6" viewBox="0 0 8 6"><path d="M0 0 H7 L3.5 4Z" fill="#e0e0e0"/></svg>
<div class="a" style="left:806px;top:617px;width:2px;height:76px;background:#3e3e3e;"></div>
<div class="a" style="left:811px;top:624px;width:55px;height:51px;background:#484848;border:1px solid #525252"></div>
<div class="a" style="left:812px;top:626px;width:51px;height:8px;background:#3a3a3a;"></div>
<div class="a" style="left:812px;top:667px;width:51px;height:8px;background:#3a3a3a;"></div>
<div class="a" style="left:812px;top:626px;width:19px;height:11px;background:#2e2e2e;border-radius:2px 2px 0 0"></div>
<div class="t" style="left:814px;top:626px;font-size:10px;line-height:10px;font-weight:bold;color:#d0d0d0">13</div>
<div class="a" style="left:812px;top:634px;width:51px;height:33px;background:#ffffff;"></div>
<div class="a" style="left:812px;top:634px;width:19px;height:3px;background:#2e2e2e;"></div>
<svg style="left:812px;top:634px" width="51" height="33" viewBox="0 0 606 391" preserveAspectRatio="none"><use href="#figt13" style="opacity:.9"/></svg>
<div class="t" style="left:834px;top:679px;font-size:10px;line-height:12px;color:#d8d8d8;font-weight:bold">0.07</div>
<svg style="left:858px;top:682px;" width="8" height="6" viewBox="0 0 8 6"><path d="M0 0 H7 L3.5 4Z" fill="#e0e0e0"/></svg>
<div class="a" style="left:869px;top:617px;width:2px;height:76px;background:#3e3e3e;"></div>
<div class="a" style="left:874px;top:624px;width:55px;height:51px;background:#484848;border:1px solid #525252"></div>
<div class="a" style="left:875px;top:626px;width:51px;height:8px;background:#3a3a3a;"></div>
<div class="a" style="left:875px;top:667px;width:51px;height:8px;background:#3a3a3a;"></div>
<div class="a" style="left:875px;top:626px;width:19px;height:11px;background:#2e2e2e;border-radius:2px 2px 0 0"></div>
<div class="t" style="left:877px;top:626px;font-size:10px;line-height:10px;font-weight:bold;color:#d0d0d0">14</div>
<div class="a" style="left:875px;top:634px;width:51px;height:33px;background:#ffffff;"></div>
<div class="a" style="left:875px;top:634px;width:19px;height:3px;background:#2e2e2e;"></div>
<svg style="left:875px;top:634px" width="51" height="33" viewBox="0 0 606 391" preserveAspectRatio="none"><use href="#figt14" style="opacity:.9"/></svg>
<div class="t" style="left:897px;top:679px;font-size:10px;line-height:12px;color:#d8d8d8;font-weight:bold">0.07</div>
<svg style="left:921px;top:682px;" width="8" height="6" viewBox="0 0 8 6"><path d="M0 0 H7 L3.5 4Z" fill="#e0e0e0"/></svg>
<div class="a" style="left:932px;top:617px;width:2px;height:76px;background:#3e3e3e;"></div>
<div class="a" style="left:937px;top:624px;width:55px;height:51px;background:#484848;border:1px solid #525252"></div>
<div class="a" style="left:938px;top:626px;width:51px;height:8px;background:#3a3a3a;"></div>
<div class="a" style="left:938px;top:667px;width:51px;height:8px;background:#3a3a3a;"></div>
<div class="a" style="left:938px;top:626px;width:19px;height:11px;background:#2e2e2e;border-radius:2px 2px 0 0"></div>
<div class="t" style="left:940px;top:626px;font-size:10px;line-height:10px;font-weight:bold;color:#d0d0d0">15</div>
<div class="a" style="left:938px;top:634px;width:51px;height:33px;background:#ffffff;"></div>
<div class="a" style="left:938px;top:634px;width:19px;height:3px;background:#2e2e2e;"></div>
<svg style="left:938px;top:634px" width="51" height="33" viewBox="0 0 606 391" preserveAspectRatio="none"><use href="#figt" style="opacity:.9"/></svg>
<div class="t" style="left:960px;top:679px;font-size:10px;line-height:12px;color:#d8d8d8;font-weight:bold">0.07</div>
<svg style="left:984px;top:682px;" width="8" height="6" viewBox="0 0 8 6"><path d="M0 0 H7 L3.5 4Z" fill="#e0e0e0"/></svg>
<div class="a" style="left:47px;top:692px;width:905px;height:2px;background:#3a3a3a;"></div>
<div class="a" style="left:47px;top:694px;width:905px;height:26px;background:#464646;"></div>
<svg style="left:57px;top:701px;" width="18" height="16" viewBox="0 0 18 16"><g fill="#cfcfcf"><rect x="1" y="11" width="15" height="3"/><rect x="3" y="6" width="3" height="4"/><rect x="7" y="6" width="8" height="2"/><rect x="7" y="9" width="6" height="1.5"/><rect x="4" y="1" width="1.5" height="4"/></g></svg>
<div class="t" style="left:94px;top:702px;font-size:12.5px;color:#b8b8b8;font-weight:normal;">Forever</div>
<svg style="left:151px;top:705px;" width="10" height="8" viewBox="0 0 10 8"><path d="M0 0 H9 L4.5 5Z" fill="#cfcfcf"/></svg>
<svg style="left:177px;top:703px;" width="14" height="12" viewBox="0 0 14 12"><rect x="1" y="1" width="1.6" height="10" fill="#8c8c8c"/><path d="M12 1 L4 6 L12 11Z" fill="none" stroke="#8c8c8c" stroke-width="1.3"/></svg>
<svg style="left:209px;top:703px;" width="14" height="12" viewBox="0 0 14 12"><path d="M8 1 L1 6 L8 11Z" fill="#cfcfcf"/><rect x="10" y="1" width="2.2" height="10" fill="#cfcfcf"/></svg>
<svg style="left:245px;top:702px;" width="14" height="14" viewBox="0 0 14 14"><path d="M2 1 L12 7 L2 13Z" fill="#cfcfcf"/></svg>
<svg style="left:278px;top:703px;" width="14" height="12" viewBox="0 0 14 12"><rect x="1" y="1" width="2.2" height="10" fill="#cfcfcf"/><path d="M5 1 L12 6 L5 11Z" fill="#cfcfcf"/></svg>
<svg style="left:314px;top:701px;" width="16" height="16" viewBox="0 0 16 16"><path d="M2 3 L5 3 M3 6 L9 12" stroke="#cfcfcf" stroke-width="1.4"/><path d="M8 9 L13 12 L11 14Z" fill="#cfcfcf"/></svg>
<svg style="left:347px;top:701px;" width="16" height="16" viewBox="0 0 16 16"><path d="M2 2 H14 V10 L10 14 H6 V6 H2Z" fill="none" stroke="#cfcfcf" stroke-width="1.6" stroke-linejoin="round"/></svg>
<svg style="left:381px;top:700px;" width="14" height="17" viewBox="0 0 14 17"><g fill="none" stroke="#cfcfcf" stroke-width="1.5"><path d="M2 4 H12 M5 4 V2 H9 V4 M3 5 L4 15 H10 L11 5 M6 7V13M8 7V13"/></g></svg>
<div class="a" style="left:410px;top:709px;width:152px;height:14px;background:#555555;border-radius:7px;border:1px solid #5c5c5c"></div>
<div class="a" style="left:952px;top:35px;width:328px;height:14px;background:#3a3a3a;"></div>
<svg style="left:982px;top:37px;" width="12" height="10" viewBox="0 0 12 10"><path d="M5.5 2.5 L3 5 L5.5 7.5 M9.5 2.5 L7 5 L9.5 7.5" fill="none" stroke="#8a8a8a" stroke-width="1.4"/></svg>
<svg style="left:1264px;top:37px;" width="12" height="10" viewBox="0 0 12 10"><path d="M2.5 2.5 L5 5 L2.5 7.5 M6.5 2.5 L9 5 L6.5 7.5" fill="none" stroke="#8a8a8a" stroke-width="1.4"/></svg>
<div class="a" style="left:952px;top:49px;width:2px;height:671px;background:#363636;"></div>
<div class="a" style="left:954px;top:49px;width:45px;height:671px;background:#474747;"></div>
<div class="a" style="left:999px;top:49px;width:2px;height:671px;background:#363636;"></div>
<div class="a" style="left:954px;top:49px;width:44px;height:44px;background:#4a4a4a;border:1px solid #3c3c3c"></div>
<div class="a" style="left:954px;top:95px;width:44px;height:43px;background:#4a4a4a;border:1px solid #3c3c3c"></div>
<div class="a" style="left:954px;top:140px;width:44px;height:43px;background:#4a4a4a;border:1px solid #3c3c3c"></div>
<svg style="left:966px;top:63px;" width="22" height="24" viewBox="0 0 22 24"><g fill="#d4d4d4"><rect x="2" y="2" width="5" height="5" fill="none" stroke="#d4d4d4" stroke-width="1.3"/><rect x="2" y="9" width="5" height="5" fill="none" stroke="#d4d4d4" stroke-width="1.3"/><rect x="2" y="16" width="5" height="5"/></g><path d="M11 6 L14 3 M11 6 L14 8 M11 6 H14 Q18 6 18 12 Q18 18 12 19" fill="none" stroke="#d4d4d4" stroke-width="1.6"/></svg>
<svg style="left:966px;top:109px;" width="22" height="22" viewBox="0 0 22 22"><g fill="none" stroke="#d4d4d4" stroke-width="1.4"><circle cx="7" cy="8" r="4.5"/><path d="M5 6 L9 10 M9 6 L5 10"/></g><g fill="#d4d4d4"><rect x="14" y="3" width="4" height="4"/><rect x="14" y="9" width="4" height="4"/><rect x="2" y="15" width="17" height="3"/></g></svg>
<svg style="left:966px;top:154px;" width="22" height="24" viewBox="0 0 22 24"><g fill="none" stroke="#d4d4d4" stroke-width="1.4"><path d="M3 4 L8 2 L14 10 L10 20 L4 12Z"/><path d="M9 8 L13 4 L20 12 L17 21 L11 16"/></g></svg>
<div class="a" style="left:1001px;top:49px;width:279px;height:32px;background:#3b3b3b;"></div>
<div class="a" style="left:1001px;top:49px;width:53px;height:31px;background:#4a4a4a;"></div>
<div class="tab" style="left:1011px;top:58px;color:#ececec">Color</div>
<div class="tab" style="left:1063px;top:58px;color:#b9b9b9">Swatches</div>
<svg style="left:1263px;top:60px;" width="13" height="10" viewBox="0 0 13 10"><rect x="0" y="0" width="12" height="9" fill="#8e8e8e"/><g fill="#7a7a7a"><rect x="0" y="2.6" width="12" height="0.8"/><rect x="0" y="5.6" width="12" height="0.8"/></g></svg>
<div class="a" style="left:1001px;top:81px;width:279px;height:4px;background:#333333;"></div>
<div class="a" style="left:1001px;top:85px;width:279px;height:32px;background:#3b3b3b;"></div>
<div class="a" style="left:1001px;top:85px;width:72px;height:31px;background:#4a4a4a;"></div>
<div class="tab" style="left:1011px;top:94px;color:#ececec">Libraries</div>
<div class="tab" style="left:1084px;top:94px;color:#b9b9b9">Adjustments</div>
<div class="tab" style="left:1182px;top:94px;color:#b9b9b9">Styles</div>
<svg style="left:1263px;top:96px;" width="13" height="10" viewBox="0 0 13 10"><rect x="0" y="0" width="12" height="9" fill="#8e8e8e"/><g fill="#7a7a7a"><rect x="0" y="2.6" width="12" height="0.8"/><rect x="0" y="5.6" width="12" height="0.8"/></g></svg>
<div class="a" style="left:1001px;top:116px;width:279px;height:4px;background:#333333;"></div>
<div class="a" style="left:1001px;top:120px;width:279px;height:32px;background:#3b3b3b;"></div>
<div class="a" style="left:1001px;top:120px;width:59px;height:32px;background:#4a4a4a;"></div>
<div class="tab" style="left:1011px;top:129px;color:#ececec">Layers</div>
<div class="tab" style="left:1071px;top:129px;color:#b9b9b9">Channels</div>
<div class="tab" style="left:1148px;top:129px;color:#b9b9b9">Paths</div>
<svg style="left:1263px;top:131px;" width="13" height="10" viewBox="0 0 13 10"><rect x="0" y="0" width="12" height="9" fill="#8e8e8e"/><g fill="#7a7a7a"><rect x="0" y="2.6" width="12" height="0.8"/><rect x="0" y="5.6" width="12" height="0.8"/></g></svg>
<div class="a" style="left:1001px;top:151px;width:279px;height:569px;background:#4a4a4a;"></div>
<div class="a" style="left:1008px;top:162px;width:101px;height:17px;background:#393939;border-radius:2px"></div>
<svg style="left:1013px;top:163px;" width="16" height="16" viewBox="0 0 16 16"><circle cx="9" cy="6.5" r="4" fill="none" stroke="#d4d4d4" stroke-width="1.6"/><path d="M6 9.5 L2.5 13" stroke="#d4d4d4" stroke-width="2"/></svg>
<div class="t" style="left:1030px;top:163px;font-size:12.5px;color:#dedede;font-weight:normal;">Kind</div>
<svg style="left:1096px;top:164px;" width="14" height="14" viewBox="0 0 14 14"><path class="ic" d="M3 5 L7 9 L11 5"/></svg>
<svg style="left:1121px;top:161px;transform:scale(0.85)" width="20" height="18" viewBox="0 0 20 18"><rect x="2" y="2" width="16" height="13" rx="1" fill="none" stroke="#d4d4d4" stroke-width="1.6"/><path d="M5 12 L8 8 L11 12 M10 12 L13 9 L15 12" fill="none" stroke="#d4d4d4" stroke-width="1.2"/></svg>
<svg style="left:1149px;top:161px;transform:scale(0.85)" width="20" height="18" viewBox="0 0 20 18"><circle cx="10" cy="9" r="7" fill="none" stroke="#d4d4d4" stroke-width="1.8"/><path d="M5 14 L15 4 A7 7 0 0 1 5 14Z" fill="#d4d4d4"/></svg>
<svg style="left:1177px;top:161px;transform:scale(0.85)" width="20" height="18" viewBox="0 0 20 18"><path d="M3 3H17V7H15.5V5H11.5V15H13.5V16.5H6.5V15H8.5V5H4.5V7H3Z" fill="#d4d4d4"/></svg>
<svg style="left:1205px;top:161px;transform:scale(0.85)" width="20" height="18" viewBox="0 0 20 18"><rect x="4" y="3.5" width="12" height="11" fill="none" stroke="#d4d4d4" stroke-width="1.6"/><g fill="#d4d4d4"><rect x="2" y="1.5" width="4" height="4"/><rect x="14" y="1.5" width="4" height="4"/><rect x="2" y="12.5" width="4" height="4"/><rect x="14" y="12.5" width="4" height="4"/></g></svg>
<svg style="left:1234px;top:161px;transform:scale(0.85)" width="20" height="18" viewBox="0 0 20 18"><path d="M3 9 H15 V17 H3Z" fill="#d4d4d4"/><path d="M6 9 V6 Q6 3 9 3 Q12 3 12 6 V9" fill="none" stroke="#d4d4d4" stroke-width="1.6"/><path d="M10 9 L17 4 V9Z" fill="#4a4a4a"/></svg>
<div class="a" style="left:1266px;top:161px;width:10px;height:18px;background:#3a3a3a;border-radius:5px"></div>
<div class="a" style="left:1266px;top:160px;width:10px;height:10px;border-radius:50%;background:#e6e6e6"></div>
<div class="a" style="left:1008px;top:191px;width:148px;height:18px;background:#474747;border:1px solid #444;border-radius:2px"></div>
<div class="t" style="left:1014px;top:193px;font-size:12.5px;color:#6e6e6e;font-weight:normal;">Normal</div>
<svg style="left:1144px;top:194px;" width="14" height="14" viewBox="0 0 14 14"><path d="M3 5 L7 9 L11 5" fill="none" stroke="#6a6a6a" stroke-width="1.4"/></svg>
<div class="t" style="left:1164px;top:193px;font-size:12.5px;color:#686868;font-weight:normal;">Opacity:</div>
<div class="t" style="left:1218px;top:193px;font-size:12.5px;color:#5c5c5c;font-weight:normal;">100%</div>
<svg style="left:1262px;top:194px;" width="14" height="14" viewBox="0 0 14 14"><path d="M3 5 L7 9 L11 5" fill="none" stroke="#606060" stroke-width="1.4"/></svg>
<div class="t" style="left:1006px;top:224px;font-size:12.5px;color:#cacaca;font-weight:normal;">Unify:</div>
<svg style="left:1042px;top:220px;" width="22" height="20" viewBox="0 0 22 20"><path d="M4 15 L9 10 M8 4 L14 10 L12 11 L10 9 L7 11 L6 8 Z" fill="#cfcfcf" stroke="#cfcfcf" stroke-width="1.4"/><g fill="none" stroke="#cfcfcf" stroke-width="1"><circle cx="13" cy="16" r="2"/><circle cx="17" cy="16" r="2"/></g></svg>
<svg style="left:1067px;top:220px;" width="22" height="20" viewBox="0 0 22 20"><path d="M2 9 Q9 2 16 9 Q9 15 2 9Z" fill="none" stroke="#cfcfcf" stroke-width="1.6"/><circle cx="9" cy="9" r="2.5" fill="#cfcfcf"/><g fill="none" stroke="#cfcfcf" stroke-width="1"><circle cx="13" cy="16" r="2"/><circle cx="17" cy="16" r="2"/></g></svg>
<svg style="left:1093px;top:220px;" width="22" height="20" viewBox="0 0 22 20"><text x="1" y="13" font-family="Liberation Serif" font-style="italic" font-size="15" fill="#cfcfcf">fx</text><g fill="none" stroke="#cfcfcf" stroke-width="1"><circle cx="13" cy="16" r="2"/><circle cx="17" cy="16" r="2"/></g></svg>
<div class="a" style="left:1149px;top:223px;width:13px;height:13px;background:#e2e2e2;border-radius:2px"></div>
<svg style="left:1150px;top:224px;" width="11" height="11" viewBox="0 0 11 11"><path d="M2.5 5.5 L4.8 8 L8.5 3" fill="none" stroke="#333" stroke-width="1.8"/></svg>
<div class="t" style="left:1166px;top:224px;font-size:12.5px;color:#dcdcdc;font-weight:normal;">Propagate Frame 1</div>
<div class="t" style="left:1006px;top:253px;font-size:12.5px;color:#6c6c6c;font-weight:normal;">Lock:</div>
<svg style="left:1043px;top:251px;" width="16" height="16" viewBox="0 0 16 16"><rect x="1.5" y="1.5" width="13" height="13" fill="none" stroke="#828282" stroke-width="1.4"/><g fill="#828282"><rect x="4" y="4" width="3" height="3"/><rect x="9" y="4" width="3" height="3"/><rect x="6.5" y="6.5" width="3" height="3"/><rect x="4" y="9" width="3" height="3"/><rect x="9" y="9" width="3" height="3"/></g></svg>
<svg style="left:1070px;top:250px;" width="18" height="18" viewBox="0 0 18 18"><path d="M15 2 L16.5 3.5 L9 11 L7.5 9.5Z M7.5 10 Q4 10 3.5 14 L2 16 Q6 16 8 14 Q9.5 12.5 8.5 11Z" fill="#828282"/></svg>
<svg style="left:1094px;top:251px;" width="16" height="16" viewBox="0 0 16 16"><g stroke="#828282" stroke-width="1.4"><path d="M8 1V15M1 8H15"/></g><g fill="#828282"><circle cx="8" cy="2" r="1.6"/><circle cx="8" cy="14" r="1.6"/><circle cx="2" cy="8" r="1.6"/><circle cx="14" cy="8" r="1.6"/></g></svg>
<svg style="left:1120px;top:251px;" width="18" height="16" viewBox="0 0 18 16"><path d="M3 1V13H16 M1 4H12L15 8V11" fill="none" stroke="#828282" stroke-width="1.4"/></svg>
<svg style="left:1147px;top:250px;" width="16" height="18" viewBox="0 0 16 18"><rect x="2" y="8" width="12" height="9" fill="#828282"/><path d="M4.5 8V5.5Q4.5 2 8 2Q11.5 2 11.5 5.5V8" fill="none" stroke="#828282" stroke-width="1.6"/><circle cx="8" cy="12" r="1.3" fill="#4a4a4a"/></svg>
<div class="t" style="left:1191px;top:253px;font-size:12.5px;color:#686868;font-weight:normal;">Fill:</div>
<div class="t" style="left:1218px;top:253px;font-size:12.5px;color:#5c5c5c;font-weight:normal;">100%</div>
<svg style="left:1262px;top:254px;" width="14" height="14" viewBox="0 0 14 14"><path d="M3 5 L7 9 L11 5" fill="none" stroke="#606060" stroke-width="1.4"/></svg>
<div class="a" style="left:1001px;top:275px;width:265px;height:423px;overflow:hidden;background:#3d3d3d">
<div class="a" style="left:0;top:-8px;width:265px;height:33px;background:#535353;border-bottom:1px solid #3e3e3e"></div>
<div class="a" style="left:35px;top:-8px;width:1px;height:33px;background:#3e3e3e"></div>
<div class="a" style="left:9px;top:1px;width:15px;height:14px;background:#4f4f4f;border:1.5px solid;border-color:#686868 #3c3c3c #3c3c3c #686868"></div>
<div class="a" style="left:39px;top:-5px;width:39px;height:26px;background:#fff;border:1.6px solid #303030;border-radius:3px"></div>
<svg style="left:41px;top:-3px" width="35" height="22" viewBox="0 0 606 391" preserveAspectRatio="none"><use href="#figt13"/></svg>
<div class="t" style="left:88px;top:2px;font-size:11.5px;color:#dedede;-webkit-text-stroke:0.6px #dedede">Layer 13</div>
<div class="a" style="left:0;top:26px;width:265px;height:33px;background:#535353;border-bottom:1px solid #3e3e3e"></div>
<div class="a" style="left:35px;top:26px;width:1px;height:33px;background:#3e3e3e"></div>
<div class="a" style="left:9px;top:35px;width:15px;height:14px;background:#4f4f4f;border:1.5px solid;border-color:#686868 #3c3c3c #3c3c3c #686868"></div>
<div class="a" style="left:39px;top:29px;width:39px;height:26px;background:#fff;border:1.6px solid #303030;border-radius:3px"></div>
<svg style="left:41px;top:31px" width="35" height="22" viewBox="0 0 606 391" preserveAspectRatio="none"><use href="#figt12"/></svg>
<div class="t" style="left:88px;top:36px;font-size:11.5px;color:#dedede;-webkit-text-stroke:0.6px #dedede">Layer 12</div>
<div class="a" style="left:0;top:59px;width:265px;height:33px;background:#535353;border-bottom:1px solid #3e3e3e"></div>
<div class="a" style="left:35px;top:59px;width:1px;height:33px;background:#3e3e3e"></div>
<div class="a" style="left:9px;top:68px;width:15px;height:14px;background:#4f4f4f;border:1.5px solid;border-color:#686868 #3c3c3c #3c3c3c #686868"></div>
<div class="a" style="left:39px;top:62px;width:39px;height:26px;background:#fff;border:1.6px solid #303030;border-radius:3px"></div>
<svg style="left:41px;top:64px" width="35" height="22" viewBox="0 0 606 391" preserveAspectRatio="none"><use href="#figt11"/></svg>
<div class="t" style="left:88px;top:69px;font-size:11.5px;color:#dedede;-webkit-text-stroke:0.6px #dedede">Layer 11</div>
<div class="a" style="left:0;top:92px;width:265px;height:33px;background:#535353;border-bottom:1px solid #3e3e3e"></div>
<div class="a" style="left:35px;top:92px;width:1px;height:33px;background:#3e3e3e"></div>
<div class="a" style="left:9px;top:101px;width:15px;height:14px;background:#4f4f4f;border:1.5px solid;border-color:#686868 #3c3c3c #3c3c3c #686868"></div>
<div class="a" style="left:39px;top:95px;width:39px;height:26px;background:#fff;border:1.6px solid #303030;border-radius:3px"></div>
<svg style="left:41px;top:97px" width="35" height="22" viewBox="0 0 606 391" preserveAspectRatio="none"><use href="#figt10"/></svg>
<div class="t" style="left:88px;top:102px;font-size:11.5px;color:#dedede;-webkit-text-stroke:0.6px #dedede">Layer 10</div>
<div class="a" style="left:0;top:125px;width:265px;height:33px;background:#535353;border-bottom:1px solid #3e3e3e"></div>
<div class="a" style="left:35px;top:125px;width:1px;height:33px;background:#3e3e3e"></div>
<div class="a" style="left:9px;top:134px;width:15px;height:14px;background:#4f4f4f;border:1.5px solid;border-color:#686868 #3c3c3c #3c3c3c #686868"></div>
<div class="a" style="left:39px;top:128px;width:39px;height:26px;background:#fff;border:1.6px solid #303030;border-radius:3px"></div>
<svg style="left:41px;top:130px" width="35" height="22" viewBox="0 0 606 391" preserveAspectRatio="none"><use href="#figt9"/></svg>
<div class="t" style="left:88px;top:135px;font-size:11.5px;color:#dedede;-webkit-text-stroke:0.6px #dedede">Layer 9</div>
<div class="a" style="left:0;top:158px;width:265px;height:33px;background:#535353;border-bottom:1px solid #3e3e3e"></div>
<div class="a" style="left:35px;top:158px;width:1px;height:33px;background:#3e3e3e"></div>
<div class="a" style="left:9px;top:167px;width:15px;height:14px;background:#4f4f4f;border:1.5px solid;border-color:#686868 #3c3c3c #3c3c3c #686868"></div>
<div class="a" style="left:39px;top:161px;width:39px;height:26px;background:#fff;border:1.6px solid #303030;border-radius:3px"></div>
<svg style="left:41px;top:163px" width="35" height="22" viewBox="0 0 606 391" preserveAspectRatio="none"><use href="#figt8"/></svg>
<div class="t" style="left:88px;top:168px;font-size:11.5px;color:#dedede;-webkit-text-stroke:0.6px #dedede">Layer 8</div>
<div class="a" style="left:0;top:191px;width:265px;height:33px;background:#535353;border-bottom:1px solid #3e3e3e"></div>
<div class="a" style="left:35px;top:191px;width:1px;height:33px;background:#3e3e3e"></div>
<div class="a" style="left:9px;top:200px;width:15px;height:14px;background:#4f4f4f;border:1.5px solid;border-color:#686868 #3c3c3c #3c3c3c #686868"></div>
<div class="a" style="left:39px;top:194px;width:39px;height:26px;background:#fff;border:1.6px solid #303030;border-radius:3px"></div>
<svg style="left:41px;top:196px" width="35" height="22" viewBox="0 0 606 391" preserveAspectRatio="none"><use href="#figt"/></svg>
<div class="t" style="left:88px;top:201px;font-size:11.5px;color:#dedede;-webkit-text-stroke:0.6px #dedede">Layer 7</div>
<div class="a" style="left:0;top:224px;width:265px;height:33px;background:#535353;border-bottom:1px solid #3e3e3e"></div>
<div class="a" style="left:35px;top:224px;width:1px;height:33px;background:#3e3e3e"></div>
<div class="a" style="left:9px;top:233px;width:15px;height:14px;background:#4f4f4f;border:1.5px solid;border-color:#686868 #3c3c3c #3c3c3c #686868"></div>
<div class="a" style="left:39px;top:227px;width:39px;height:26px;background:#fff;border:1.6px solid #303030;border-radius:3px"></div>
<svg style="left:41px;top:229px" width="35" height="22" viewBox="0 0 606 391" preserveAspectRatio="none"><use href="#figt"/></svg>
<div class="t" style="left:88px;top:234px;font-size:11.5px;color:#dedede;-webkit-text-stroke:0.6px #dedede">Layer 6</div>
<div class="a" style="left:0;top:257px;width:265px;height:33px;background:#535353;border-bottom:1px solid #3e3e3e"></div>
<div class="a" style="left:35px;top:257px;width:1px;height:33px;background:#3e3e3e"></div>
<div class="a" style="left:9px;top:266px;width:15px;height:14px;background:#4f4f4f;border:1.5px solid;border-color:#686868 #3c3c3c #3c3c3c #686868"></div>
<div class="a" style="left:39px;top:260px;width:39px;height:26px;background:#fff;border:1.6px solid #303030;border-radius:3px"></div>
<svg style="left:41px;top:262px" width="35" height="22" viewBox="0 0 606 391" preserveAspectRatio="none"><use href="#figt"/></svg>
<div class="t" style="left:88px;top:267px;font-size:11.5px;color:#dedede;-webkit-text-stroke:0.6px #dedede">Layer 5</div>
<div class="a" style="left:0;top:290px;width:265px;height:33px;background:#535353;border-bottom:1px solid #3e3e3e"></div>
<div class="a" style="left:35px;top:290px;width:1px;height:33px;background:#3e3e3e"></div>
<div class="a" style="left:9px;top:299px;width:15px;height:14px;background:#4f4f4f;border:1.5px solid;border-color:#686868 #3c3c3c #3c3c3c #686868"></div>
<div class="a" style="left:39px;top:293px;width:39px;height:26px;background:#fff;border:1.6px solid #303030;border-radius:3px"></div>
<svg style="left:41px;top:295px" width="35" height="22" viewBox="0 0 606 391" preserveAspectRatio="none"><use href="#figt"/></svg>
<div class="t" style="left:88px;top:300px;font-size:11.5px;color:#dedede;-webkit-text-stroke:0.6px #dedede">Layer 4</div>
<div class="a" style="left:0;top:323px;width:265px;height:33px;background:#535353;border-bottom:1px solid #3e3e3e"></div>
<div class="a" style="left:35px;top:323px;width:1px;height:33px;background:#3e3e3e"></div>
<div class="a" style="left:9px;top:332px;width:15px;height:14px;background:#4f4f4f;border:1.5px solid;border-color:#686868 #3c3c3c #3c3c3c #686868"></div>
<div class="a" style="left:39px;top:326px;width:39px;height:26px;background:#fff;border:1.6px solid #303030;border-radius:3px"></div>
<svg style="left:41px;top:328px" width="35" height="22" viewBox="0 0 606 391" preserveAspectRatio="none"><use href="#figt"/></svg>
<div class="t" style="left:88px;top:333px;font-size:11.5px;color:#dedede;-webkit-text-stroke:0.6px #dedede">Layer 3</div>
<div class="a" style="left:0;top:356px;width:265px;height:33px;background:#535353;border-bottom:1px solid #3e3e3e"></div>
<div class="a" style="left:35px;top:356px;width:1px;height:33px;background:#3e3e3e"></div>
<div class="a" style="left:9px;top:365px;width:15px;height:14px;background:#4f4f4f;border:1.5px solid;border-color:#686868 #3c3c3c #3c3c3c #686868"></div>
<div class="a" style="left:39px;top:359px;width:39px;height:26px;background:#fff;border:1.6px solid #303030;border-radius:3px"></div>
<svg style="left:41px;top:361px" width="35" height="22" viewBox="0 0 606 391" preserveAspectRatio="none"><use href="#figt"/></svg>
<div class="t" style="left:88px;top:366px;font-size:11.5px;color:#dedede;-webkit-text-stroke:0.6px #dedede">Layer 2</div>
<div class="a" style="left:0;top:390px;width:265px;height:33px;background:#535353;border-bottom:1px solid #3e3e3e"></div>
<div class="a" style="left:35px;top:390px;width:1px;height:33px;background:#3e3e3e"></div>
<div class="a" style="left:36px;top:391px;width:229px;height:32px;background:#687c95"></div>
<svg style="left:9px;top:400px" width="18" height="12" viewBox="0 0 18 12"><path d="M1 6 Q9 -2 17 6 Q9 14 1 6Z" fill="#e8e8e8"/><circle cx="9" cy="6" r="2.8" fill="#535353"/><circle cx="9" cy="6" r="1.3" fill="#e8e8e8"/></svg>
<svg style="left:36px;top:390px" width="46" height="33" viewBox="0 0 46 33"><path d="M2 12 V2 H13 M33 2 H44 V12 M44 21 V31 H33 M13 31 H2 V21" fill="none" stroke="#dde3ea" stroke-width="2.6"/></svg>
<div class="a" style="left:39px;top:393px;width:39px;height:26px;background:#fff;border:1.6px solid #303030;border-radius:3px"></div>
<svg style="left:41px;top:395px" width="35" height="22" viewBox="0 0 606 391" preserveAspectRatio="none"><use href="#figt"/></svg>
<div class="t" style="left:88px;top:400px;font-size:11.5px;color:#e4e8ee;-webkit-text-stroke:0.6px #e4e8ee">Layer 1</div>
</div>
<div class="a" style="left:1265px;top:275px;width:15px;height:423px;background:#434343;"></div>
<div class="a" style="left:1265px;top:275px;width:2px;height:423px;background:#3a3a3a;"></div>
<div class="a" style="left:1269px;top:425px;width:9px;height:111px;background:#5c5c5c;border-radius:4px"></div>
<div class="a" style="left:1001px;top:698px;width:279px;height:22px;background:#4a4a4a;"></div>
<svg style="left:1042px;top:702px;" width="20" height="14" viewBox="0 0 20 14"><g fill="none" stroke="#8a8a8a" stroke-width="1.6"><rect x="2" y="4" width="7" height="6" rx="3"/><rect x="10" y="4" width="7" height="6" rx="3"/></g></svg>
<svg style="left:1074px;top:700px;" width="20" height="18" viewBox="0 0 20 18"><text x="1" y="14" font-family="Liberation Serif" font-style="italic" font-size="16" fill="#d0d0d0">fx</text></svg>
<svg style="left:1106px;top:702px;" width="18" height="14" viewBox="0 0 18 14"><rect x="1" y="1" width="16" height="12" fill="#d0d0d0"/><ellipse cx="9" cy="7" rx="4.5" ry="3.8" fill="#4a4a4a"/></svg>
<svg style="left:1138px;top:701px;" width="18" height="16" viewBox="0 0 18 16"><circle cx="9" cy="8" r="6.5" fill="none" stroke="#d0d0d0" stroke-width="1.8"/><path d="M4.4 12.6 L13.6 3.4 A6.5 6.5 0 0 1 4.4 12.6Z" fill="#d0d0d0"/></svg>
<svg style="left:1170px;top:702px;" width="18" height="14" viewBox="0 0 18 14"><path d="M1 3 H7 L8 4.5 H17 V13 H1Z" fill="#d0d0d0"/></svg>
<svg style="left:1202px;top:701px;" width="18" height="16" viewBox="0 0 18 16"><path d="M2 2 H15 V10 L11 14 H6 V6 H2Z" fill="none" stroke="#d0d0d0" stroke-width="1.7" stroke-linejoin="round"/></svg>
<svg style="left:1235px;top:700px;" width="16" height="18" viewBox="0 0 16 18"><g fill="none" stroke="#d0d0d0" stroke-width="1.5"><path d="M2 4 H14 M6 4 V2 H10 V4 M3.5 5 L4.5 16 H11.5 L12.5 5 M6.5 7V14M9.5 7V14"/></g></svg>
</div></body></html>
